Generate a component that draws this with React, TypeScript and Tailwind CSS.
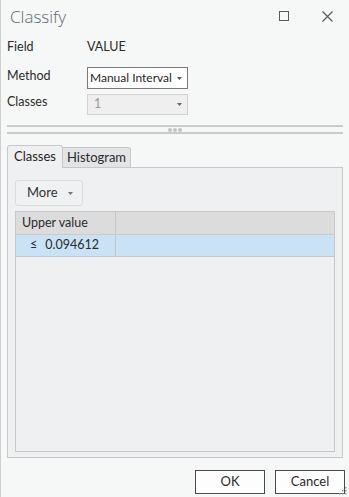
const font = { fontFamily: 'Lato, "Noto Sans", sans-serif' }

function Caret({ className = '' }: { className?: string }) {
  return (
    <svg width="5" height="3" viewBox="0 0 5 3" className={`shrink-0 ${className}`}>
      <path d="M0 0h5L2.5 3z" fill="currentColor" />
    </svg>
  )
}

export default function App() {
  return (
    <div
      className="w-[349px] h-[497px] bg-[#f6f7f7] border-l border-[#cfcfcf] flex flex-col text-[12.5px] text-[#2b2b2b] relative overflow-hidden whitespace-nowrap"
      style={font}
    >
      {/* title bar */}
      <div className="h-[32px] flex items-center pl-[9px] pr-[16px]">
        <span className="font-light text-[#5d6872] leading-none" style={{ fontFamily: '"Open Sans", "Noto Sans", sans-serif', fontSize: 17 }}>Classify</span>
        <div className="ml-auto flex items-center gap-[33px]">
          <div className="w-[10px] h-[10px] border-[1.5px] border-[#5a5a5a]" />
          <svg width="11" height="11" viewBox="0 0 11 11">
            <path d="M0.5 0.5l10 10M10.5 0.5l-10 10" stroke="#5a5a5a" strokeWidth="1.2" />
          </svg>
        </div>
      </div>

      {/* fields */}
      <div className="pl-[6px] flex flex-col">
        <div className="flex items-center h-[20px] mt-[5px]">
          <span className="w-[80px]">Field</span>
          <span>VALUE</span>
        </div>
        <div className="flex items-center mt-[10px]">
          <span className="w-[80px] -mt-[4px]">Method</span>
          <div className="w-[101px] h-[22px] border border-[#7a7a7a] bg-white flex items-center pl-[2px] pr-[5px]">
            <span className="text-[#1f1f1f] text-[12px]">Manual Interval</span>
            <Caret className="ml-auto text-[#555]" />
          </div>
        </div>
        <div className="flex items-center mt-[5px]">
          <span className="w-[80px] -mt-[4px]">Classes</span>
          <div className="w-[101px] h-[21px] border border-[#d2d2d2] bg-[#efefef] flex items-center pl-[6px] pr-[5px]">
            <span className="text-[#9a9a9a]">1</span>
            <Caret className="ml-auto text-[#666]" />
          </div>
        </div>
      </div>

      {/* splitter */}
      <div className="mx-[6px] mt-[10px] flex flex-col">
        <div className="h-[2px] bg-[#cbcbcb]" />
        <div className="h-[5px] flex items-center justify-center gap-[1px]">
          <div className="w-[4px] h-[4px] rounded-full bg-[#c3c3c3]" />
          <div className="w-[4px] h-[4px] rounded-full bg-[#c3c3c3]" />
          <div className="w-[4px] h-[4px] rounded-full bg-[#c3c3c3]" />
        </div>
        <div className="h-[2px] bg-[#cbcbcb]" />
      </div>

      {/* tabs */}
      <div className="mx-[6px] mt-[11px] flex items-end">
        <div className="w-[56px] h-[23px] bg-[#eff0f2] border border-b-0 border-[#c8c8c8] rounded-t-[3px] flex items-center justify-center text-[13px] text-[#1f1f1f] relative -mb-[1px] z-10">
          Classes
        </div>
        <div className="w-[68px] h-[20px] bg-[#e3e4e6] border border-l-0 border-b-0 border-[#c8c8c8] rounded-tr-[3px] flex items-center justify-center text-[13px] text-[#2b2b2b]">
          Histogram
        </div>
      </div>

      {/* tab panel */}
      <div className="mx-[6px] h-[291px] border border-[#c8c8c8] bg-[#eff0f2] flex flex-col px-[7px]">
        <div className="mt-[12px] w-[68px] h-[26px] border border-[#dcdcdc] rounded-[3px] bg-[#f0f1f3] flex items-center pl-[11px] pr-[9px] text-[13px] text-[#333]">
          <span>More</span>
          <Caret className="ml-auto text-[#777]" />
        </div>
        <div className="mt-[5px] w-[320px] h-[241px] border border-[#c8c8c8] flex flex-col">
          <div className="h-[23px] bg-[#dcdcdc] border-b border-[#cbcbcb] flex">
            <div className="w-[100px] border-r border-[#c6c6c6] flex items-center pl-[6px] text-[#2b2b2b]">Upper value</div>
            <div className="flex-1" />
          </div>
          <div className="h-[22px] bg-[#cae2f5] border-b border-[#c8c8c8] flex">
            <div className="w-[100px] border-r border-[#c6c6c6] flex items-center pl-[14px] gap-[8px] text-[#2b2b2b]">
              <span>≤</span>
              <span>0.094612</span>
            </div>
            <div className="flex-1" />
          </div>
        </div>
      </div>

      {/* footer */}
      <div className="flex justify-end gap-[10px] pr-[4px] mt-[12px]">
        <div className="w-[70px] h-[24px] border border-[#4a4a4a] bg-[#fdfdfd] flex items-center justify-center text-[13px] text-[#2b2b2b]">OK</div>
        <div className="w-[70px] h-[24px] border border-[#4a4a4a] bg-[#fdfdfd] flex items-center justify-center text-[13px] text-[#2b2b2b]">Cancel</div>
      </div>

      {/* resize grip */}
      <svg width="8" height="8" viewBox="0 0 8 8" className="absolute right-[2px] bottom-[2px]">
        <rect x="6" y="0" width="1.5" height="1.5" fill="#9a9a9a" />
        <rect x="3" y="3" width="1.5" height="1.5" fill="#9a9a9a" />
        <rect x="6" y="3" width="1.5" height="1.5" fill="#9a9a9a" />
        <rect x="0" y="6" width="1.5" height="1.5" fill="#9a9a9a" />
        <rect x="3" y="6" width="1.5" height="1.5" fill="#9a9a9a" />
        <rect x="6" y="6" width="1.5" height="1.5" fill="#9a9a9a" />
      </svg>
    </div>
  )
}
